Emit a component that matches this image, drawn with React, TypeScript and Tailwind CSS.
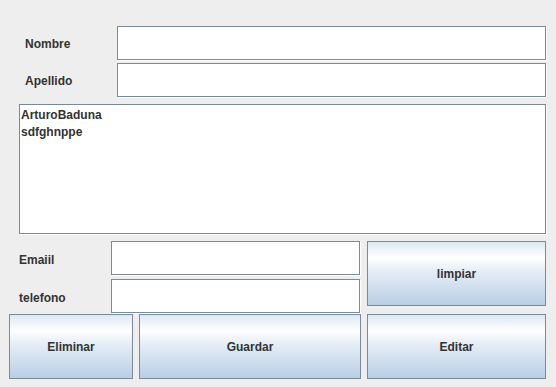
const font = "font-['Liberation_Sans',Arial,sans-serif] font-bold text-[12px] text-[#333333]";

function Field({ className = "" }: { className?: string }) {
  return (
    <div
      className={`h-[34px] bg-white border border-[#7a8a99] shadow-[1px_1px_0_#ffffff] ${className}`}
    />
  );
}

function MetalButton({ label, className = "" }: { label: string; className?: string }) {
  return (
    <button
      className={`h-[65px] border border-[#7a8a99] bg-[linear-gradient(to_bottom,#dde8f3_0%,#ffffff_25%,#e6eef7_45%,#b8cfe5_100%)] flex items-center justify-center ${font} ${className}`}
    >
      {label}
    </button>
  );
}

export default function App() {
  return (
    <div className={`w-[556px] h-[387px] bg-[#eeeeee] overflow-hidden pt-[26px] ${font}`}>
      <div className="flex items-center">
        <span className="w-[117px] pl-[25px] pt-[2px]">Nombre</span>
        <Field className="w-[429px]" />
      </div>
      <div className="flex items-center mt-[3px]">
        <span className="w-[117px] pl-[25px] pt-[2px]">Apellido</span>
        <Field className="w-[429px]" />
      </div>
      <div className="ml-[19px] mt-[7px] w-[527px] h-[130px] bg-white border border-[#7a8a99] shadow-[1px_1px_0_#ffffff] pl-[1px] pt-[2px] leading-[17px]">
        <div>ArturoBaduna</div>
        <div>sdfghnppe</div>
      </div>
      <div className="flex mt-[7px]">
        <div className="w-[367px] flex flex-col gap-[4px]">
          <div className="flex items-center">
            <span className="w-[111px] pl-[19px] pt-[3px]">Emaiil</span>
            <Field className="w-[249px]" />
          </div>
          <div className="flex items-center">
            <span className="w-[111px] pl-[19px] pt-[3px]">telefono</span>
            <Field className="w-[249px]" />
          </div>
        </div>
        <MetalButton label="limpiar" className="w-[179px]" />
      </div>
      <div className="flex gap-[6px] mt-[1px] ml-[9px]">
        <MetalButton label="Eliminar" className="w-[124px]" />
        <MetalButton label="Guardar" className="w-[222px]" />
        <MetalButton label="Editar" className="w-[179px]" />
      </div>
    </div>
  );
}
